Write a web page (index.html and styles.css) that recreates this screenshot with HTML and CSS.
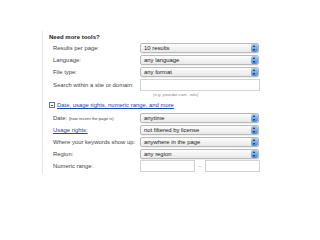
FILE: index.html
```html
<!DOCTYPE html>
<html lang="en">
<head>
    <meta charset="UTF-8">
    <title>Need more tools?</title>
    <link rel="stylesheet" href="styles.css">
</head>
<body>
    <div class="panel">
        <div class="heading">Need more tools?</div>

        <div class="row">
            <span class="label">Results per page:</span>
            <div class="select"><span>10 results</span><i class="stepper"></i></div>
        </div>
        <div class="row">
            <span class="label">Language:</span>
            <div class="select"><span>any language</span><i class="stepper"></i></div>
        </div>
        <div class="row">
            <span class="label">File type:</span>
            <div class="select"><span>any format</span><i class="stepper"></i></div>
        </div>
        <div class="row tall">
            <span class="label">Search within a site or domain:</span>
            <div class="input"></div>
        </div>
        <div class="hint">(e.g. youtube.com, .edu)</div>

        <div class="toggle">
            <span class="box"></span>
            <a href="#">Date, usage rights, numeric range, and more</a>
        </div>

        <div class="row">
            <span class="label">Date: <small>(how recent the page is)</small></span>
            <div class="select"><span>anytime</span><i class="stepper"></i></div>
        </div>
        <div class="row">
            <span class="label"><a href="#">Usage rights:</a></span>
            <div class="select"><span>not filtered by license</span><i class="stepper"></i></div>
        </div>
        <div class="row">
            <span class="label">Where your keywords show up:</span>
            <div class="select"><span>anywhere in the page</span><i class="stepper"></i></div>
        </div>
        <div class="row">
            <span class="label">Region:</span>
            <div class="select"><span>any region</span><i class="stepper"></i></div>
        </div>
        <div class="row">
            <span class="label">Numeric range:</span>
            <div class="range">
                <div class="input small"></div>
                <span class="dash">&ndash;</span>
                <div class="input small"></div>
            </div>
        </div>
    </div>
</body>
</html>
```

FILE: styles.css
```css
body {
    margin: 0;
    background: #fff;
    font-family: "Liberation Sans", Arial, sans-serif;
    font-size: 5.9px;
    color: #444;
}
.panel {
    margin: 31px 0 0 42px;
    width: 226px;
    padding: 1px 0 2px 6px;
    border-left: 1px solid #e6e6e6;
}
.heading {
    height: 10px;
    line-height: 10px;
    font-size: 6px;
    font-weight: bold;
    color: #222;
}
.row {
    display: flex;
    align-items: center;
    height: 12px;
    padding-left: 4px;
}
.row.tall {
    height: 13px;
}
.label {
    width: 87px;
    white-space: nowrap;
}
.label small {
    font-size: 4.2px;
}
a {
    color: #2346b0;
}
.select {
    display: flex;
    align-items: center;
    justify-content: space-between;
    width: 114px;
    height: 8px;
    padding-left: 3px;
    border: 1px solid #b9b9b9;
    border-radius: 2px;
    background: linear-gradient(#fdfdfd, #e9e9e9);
    color: #222;
    box-shadow: 0 1px 0 #efefef;
}
.stepper {
    position: relative;
    width: 7px;
    height: 8px;
    border-radius: 2px;
    background: linear-gradient(#a9cdf5, #4b8ee0);
}
.stepper::before,
.stepper::after {
    content: "";
    position: absolute;
    left: 2px;
    border-left: 1.5px solid transparent;
    border-right: 1.5px solid transparent;
}
.stepper::before {
    top: 1px;
    border-bottom: 2px solid #123;
}
.stepper::after {
    bottom: 1px;
    border-top: 2px solid #123;
}
.input {
    width: 118px;
    height: 10px;
    border: 1px solid #d3d3d3;
    background: #fff;
}
.input.small {
    width: 53px;
}
.range {
    display: flex;
    align-items: center;
}
.dash {
    width: 10px;
    text-align: center;
    color: #aaa;
}
.hint {
    height: 8px;
    line-height: 8px;
    padding-left: 104px;
    font-size: 4.2px;
    color: #888;
}
.toggle {
    display: flex;
    align-items: center;
    height: 12px;
    margin-bottom: 1px;
    white-space: nowrap;
}
.box {
    position: relative;
    width: 4px;
    height: 4px;
    margin-right: 2px;
    border: 1px solid #5a74b8;
}
.box::after {
    content: "";
    position: absolute;
    left: 1px;
    right: 1px;
    top: 1.5px;
    height: 1px;
    background: #2346b0;
}
```
